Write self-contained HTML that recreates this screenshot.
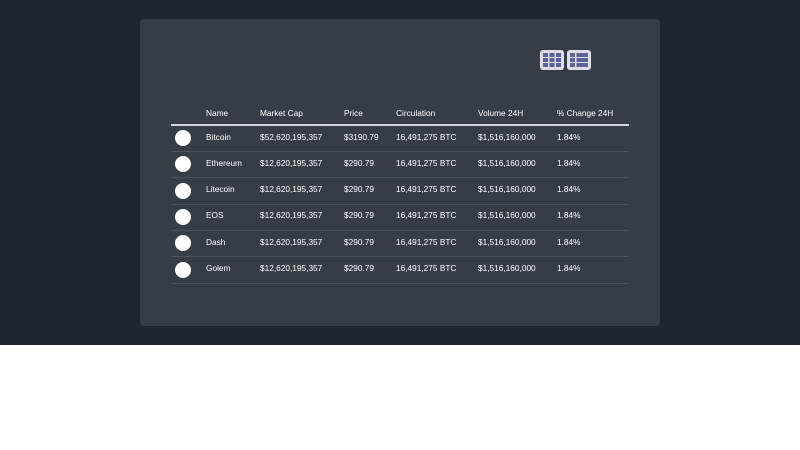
<!DOCTYPE html><html><head><style>
*{margin:0;padding:0}body{width:800px;height:450px;background:#fff;position:relative;font-family:"Liberation Sans",sans-serif;overflow:hidden}
.top{position:absolute;left:0;top:0;width:800px;height:345px;background:#20262e}
.card{position:absolute;left:140px;top:19px;width:520px;height:307px;background:#363d45;border-radius:4px}
.ic{position:absolute;top:50px;width:24px;height:20px;background:#dcdde8;border-radius:3px}
.t{position:absolute;font-size:8.3px;color:#fff;white-space:nowrap}
.ln{position:absolute;left:171px;width:458px;height:1px;background:#4a5159}
.c{position:absolute;left:175px;width:16px;height:16px;border-radius:50%;background:#fff}
</style></head><body><div class="top"></div><div class="card"></div>
<div class="ic" style="left:540px"><svg width="24" height="20"><g fill="#5c6196"><rect x="3" y="3" width="5" height="4"/><rect x="9.5" y="3" width="5" height="4"/><rect x="16" y="3" width="5" height="4"/><rect x="3" y="8" width="5" height="4"/><rect x="9.5" y="8" width="5" height="4"/><rect x="16" y="8" width="5" height="4"/><rect x="3" y="13" width="5" height="4"/><rect x="9.5" y="13" width="5" height="4"/><rect x="16" y="13" width="5" height="4"/></g></svg></div>
<div class="ic" style="left:567px"><svg width="24" height="20"><g fill="#5c6196"><rect x="3" y="3" width="5" height="4"/><rect x="9.5" y="3" width="11.5" height="4"/><rect x="3" y="8" width="5" height="4"/><rect x="9.5" y="8" width="11.5" height="4"/><rect x="3" y="13" width="5" height="4"/><rect x="9.5" y="13" width="11.5" height="4"/></g></svg></div>
<div class="t" style="left:206px;top:108px">Name</div><div class="t" style="left:260px;top:108px">Market Cap</div><div class="t" style="left:344px;top:108px">Price</div><div class="t" style="left:396px;top:108px">Circulation</div><div class="t" style="left:478px;top:108px">Volume 24H</div><div class="t" style="left:557px;top:108px">% Change 24H</div>
<div class="ln" style="top:124px;height:2px;background:#d0d3d8"></div>
<script>
var n=["Bitcoin","Ethereum","Litecoin","EOS","Dash","Golem"],h="";
n.forEach(function(x,i){var y=131.5+i*26.3;h+='<div class="c" style="top:'+(y-1.5)+'px"></div><div class="t" style="left:206px;top:'+y+'px">'+x+'</div><div class="t" style="left:260px;top:'+y+'px">'+(i?"$12,620,195,357":"$52,620,195,357")+'</div><div class="t" style="left:344px;top:'+y+'px">'+(i?"$290.79":"$3190.79")+'</div><div class="t" style="left:396px;top:'+y+'px">16,491,275 BTC</div><div class="t" style="left:478px;top:'+y+'px">$1,516,160,000</div><div class="t" style="left:557px;top:'+y+'px">1.84%</div><div class="ln" style="top:'+(151+i*26.3)+'px"></div>';});
document.write(h);
</script></body></html>
